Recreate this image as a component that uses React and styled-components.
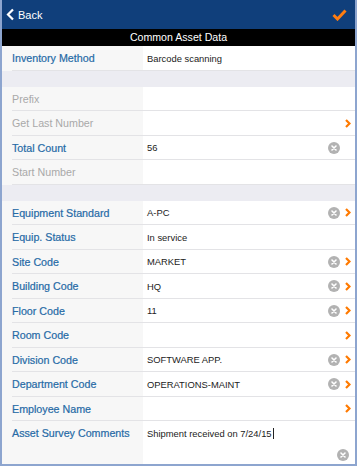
import React from 'react';
import styled, { createGlobalStyle } from 'styled-components';

const GlobalStyle = createGlobalStyle`
  html, body {
    margin: 0;
    padding: 0;
    background: #ffffff;
  }
  body {
    font-family: "Liberation Sans", Arial, sans-serif;
  }
`;

const sections = [
  [{ label: 'Inventory Method', value: 'Barcode scanning' }],
  [
    { label: 'Prefix', disabled: true },
    { label: 'Get Last Number', disabled: true, chevron: true },
    { label: 'Total Count', value: '56', clear: true },
    { label: 'Start Number', disabled: true },
  ],
  [
    { label: 'Equipment Standard', value: 'A-PC', clear: true, chevron: true },
    { label: 'Equip. Status', value: 'In service' },
    { label: 'Site Code', value: 'MARKET', clear: true, chevron: true },
    { label: 'Building Code', value: 'HQ', clear: true, chevron: true },
    { label: 'Floor Code', value: '11', clear: true, chevron: true },
    { label: 'Room Code', chevron: true },
    { label: 'Division Code', value: 'SOFTWARE APP.', clear: true, chevron: true },
    { label: 'Department Code', value: 'OPERATIONS-MAINT', clear: true, chevron: true },
    { label: 'Employee Name', chevron: true },
  ],
];

const ClearIcon = () => (
  <svg width="12" height="12" viewBox="0 0 12 12">
    <circle cx="6" cy="6" r="6" fill="#b2b2b2" />
    <path d="M4 4 L8 8 M8 4 L4 8" stroke="#ffffff" strokeWidth="1.6" strokeLinecap="round" />
  </svg>
);

const ChevronIcon = () => (
  <svg width="6" height="9" viewBox="0 0 6 9">
    <path d="M1 1 L4.5 4.5 L1 8" fill="none" stroke="#ff7a00" strokeWidth="2.2" />
  </svg>
);

const App = () => {
  return (
    <>
      <GlobalStyle />
      <Frame>
        <Header>
          <BackButton>
            <svg width="9" height="13" viewBox="0 0 9 13">
              <path d="M7 1.5 L2 6.5 L7 11.5" fill="none" stroke="#ffffff" strokeWidth="2.2" />
            </svg>
            Back
          </BackButton>
          <svg width="15" height="12" viewBox="0 0 15 12">
            <path d="M1.5 6 L5.5 10 L13.5 1.5" fill="none" stroke="#ff7d10" strokeWidth="3" />
          </svg>
        </Header>
        <TitleBar>Common Asset Data</TitleBar>
        {sections.map((rows, i) => (
          <React.Fragment key={i}>
            {i > 0 && <Gap />}
            <Section>
              {rows.map((row) => (
                <Row key={row.label}>
                  <Label disabled={row.disabled}>{row.label}</Label>
                  <Value>
                    <ValueText>{row.value}</ValueText>
                    <Icons>
                      {row.clear && <ClearIcon />}
                      <ChevronSlot>{row.chevron && <ChevronIcon />}</ChevronSlot>
                    </Icons>
                  </Value>
                </Row>
              ))}
            </Section>
          </React.Fragment>
        ))}
        <CommentRow>
          <Label>Asset Survey Comments</Label>
          <CommentValue>
            <ValueText>
              Shipment received on 7/24/15<Caret />
            </ValueText>
            <CommentClear>
              <ClearIcon />
            </CommentClear>
          </CommentValue>
        </CommentRow>
      </Frame>
    </>
  );
};

const Frame = styled.div`
  width: 357px;
  height: 466px;
  box-sizing: border-box;
  border: 2px solid #8da5cf;
  border-top: none;
  background: #ececf2;
  display: flex;
  flex-direction: column;
  overflow: hidden;
`;

const Header = styled.div`
  height: 29px;
  background: #103f7b;
  display: flex;
  align-items: center;
  justify-content: space-between;
  padding: 0 8px 0 4px;
  flex-shrink: 0;
`;

const BackButton = styled.div`
  display: flex;
  align-items: center;
  gap: 3px;
  color: #ffffff;
  font-size: 11px;
`;

const TitleBar = styled.div`
  height: 17px;
  background: #000000;
  color: #ffffff;
  font-size: 10.6px;
  line-height: 17px;
  text-align: center;
  flex-shrink: 0;
`;

const Gap = styled.div`
  height: 16px;
  flex-shrink: 0;
`;

const Section = styled.div`
  display: flex;
  flex-direction: column;
`;

const Row = styled.div`
  height: 24.5px;
  display: flex;
  background: linear-gradient(to right, #f7f7f7 141px, #ffffff 141px);
  position: relative;
  flex-shrink: 0;

  &::after {
    content: '';
    position: absolute;
    left: 10px;
    right: 0;
    bottom: 0;
    border-bottom: 1px solid #e3e3e6;
  }
`;

const Label = styled.div`
  width: 141px;
  box-sizing: border-box;
  padding-left: 10px;
  font-size: 10.7px;
  line-height: 24px;
  color: ${(p) => (p.disabled ? '#a9a9a9' : '#266aa6')};
  white-space: nowrap;
  -webkit-text-stroke: ${(p) => (p.disabled ? '0' : '0.2px')};
`;

const Value = styled.div`
  flex: 1;
  display: flex;
  align-items: center;
  padding-left: 4px;
  padding-right: 4px;
`;

const ValueText = styled.div`
  flex: 1;
  font-size: 9.4px;
  color: #222222;
  white-space: nowrap;
`;

const Icons = styled.div`
  display: flex;
  align-items: center;
  gap: 3px;
`;

const ChevronSlot = styled.div`
  width: 8px;
  display: flex;
  justify-content: flex-end;
`;

const CommentRow = styled(Row)`
  flex: 1;
  height: auto;
  &::after {
    display: none;
  }
`;

const CommentValue = styled.div`
  flex: 1;
  display: flex;
  flex-direction: column;
  padding: 7px 6px 3px 4px;
`;

const Caret = styled.span`
  display: inline-block;
  width: 1px;
  height: 11px;
  background: #222222;
  vertical-align: -2px;
  margin-left: 1px;
`;

const CommentClear = styled.div`
  margin-top: auto;
  display: flex;
  justify-content: flex-end;
`;

export default App;
